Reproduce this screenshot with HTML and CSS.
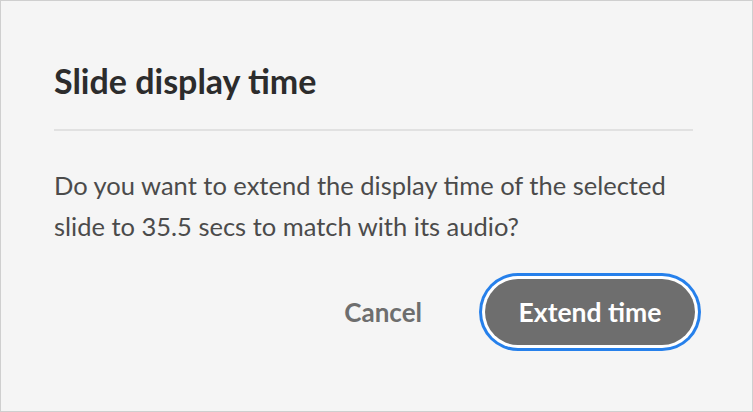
FILE: index.html
```html
<!DOCTYPE html>
<html lang="en">
<head>
<meta charset="utf-8">
<title>Slide display time</title>
<link rel="stylesheet" href="styles.css">
</head>
<body>
<div class="dialog">
  <h1 class="title">Slide display time</h1>
  <div class="divider"></div>
  <p class="content">Do you want to extend the display time of the selected slide to 35.5 secs to match with its audio?</p>
  <div class="actions">
    <button class="btn-quiet" type="button">Cancel</button>
    <button class="btn-primary" type="button">Extend time</button>
  </div>
</div>
</body>
</html>
```
FILE: styles.css
```css
html, body {
  margin: 0;
  padding: 0;
}
body {
  width: 753px;
  height: 412px;
  background: #f5f5f5;
  font-family: Lato, "Open Sans", "Liberation Sans", sans-serif;
}
.dialog {
  box-sizing: border-box;
  width: 753px;
  height: 412px;
  border: 1px solid #cfcfcf;
  background: #f5f5f5;
  padding: 60px 59px 0 53px;
  display: flex;
  flex-direction: column;
}
.title {
  margin: 0;
  font-size: 34px;
  line-height: 40px;
  font-weight: 700;
  color: #2c2c2c;
}
.divider {
  margin-top: 28px;
  height: 2px;
  background: #e1e1e1;
}
.content {
  margin: 34px 0 0;
  font-size: 25.5px;
  line-height: 41px;
  color: #4b4b4b;
}
.actions {
  margin-top: 32px;
  display: flex;
  justify-content: flex-end;
  align-items: center;
  margin-right: -2px;
}
.btn-quiet {
  border: 0;
  background: none;
  font-family: inherit;
  font-size: 26px;
  font-weight: 700;
  color: #6e6e6e;
  padding: 0;
  margin-right: 63px;
}
.btn-primary {
  border: 0;
  width: 210px;
  height: 66px;
  border-radius: 33px;
  background: #6e6e6e;
  color: #ffffff;
  font-family: inherit;
  font-size: 26.5px;
  font-weight: 700;
  box-shadow: 0 0 0 3px #ffffff, 0 0 0 6px #2680eb;
}
```
